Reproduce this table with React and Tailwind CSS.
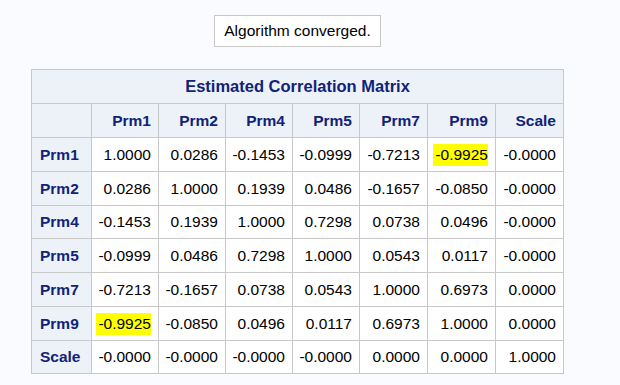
const cols = ['Prm1', 'Prm2', 'Prm4', 'Prm5', 'Prm7', 'Prm9', 'Scale'];

const rows = [
  ['Prm1', ['1.0000', '0.0286', '-0.1453', '-0.0999', '-0.7213', '-0.9925', '-0.0000']],
  ['Prm2', ['0.0286', '1.0000', '0.1939', '0.0486', '-0.1657', '-0.0850', '-0.0000']],
  ['Prm4', ['-0.1453', '0.1939', '1.0000', '0.7298', '0.0738', '0.0496', '-0.0000']],
  ['Prm5', ['-0.0999', '0.0486', '0.7298', '1.0000', '0.0543', '0.0117', '-0.0000']],
  ['Prm7', ['-0.7213', '-0.1657', '0.0738', '0.0543', '1.0000', '0.6973', '0.0000']],
  ['Prm9', ['-0.9925', '-0.0850', '0.0496', '0.0117', '0.6973', '1.0000', '0.0000']],
  ['Scale', ['-0.0000', '-0.0000', '-0.0000', '-0.0000', '0.0000', '0.0000', '1.0000']],
];

// cells flagged in the output
const flagged = { 'Prm1:Prm9': true, 'Prm9:Prm1': true };

export default function App() {
  return (
    <div
      className="min-h-[385px] w-[620px] bg-[#fafbfe] text-[15.5px]"
      style={{ fontFamily: '"Liberation Sans", Arial, sans-serif' }}
    >
      <div className="flex w-[595px] flex-col items-center pt-[15px]">
        {/* note */}
        <div className="flex h-[32px] items-center border border-[#c8c8c8] bg-white px-[9px] text-black">
          Algorithm converged.
        </div>

        {/* matrix */}
        <table className="mt-[22px] w-[533px] table-fixed border-collapse border border-[#c1c1c1] bg-white">
          <colgroup>
            <col className="w-[60px]" />
            {cols.map((c, i) => (
              <col key={c} className={i < 4 ? 'w-[67px]' : 'w-[68px]'} />
            ))}
          </colgroup>
          <thead>
            <tr className="h-[34px]">
              <th colSpan={8} className="border border-[#c8c8c8] bg-[#edf2f9] text-center text-[16.5px] font-bold text-[#112277]">
                Estimated Correlation Matrix
              </th>
            </tr>
            <tr className="h-[34px]">
              <th className="border border-[#c8c8c8] bg-[#edf2f9]"></th>
              {cols.map((c) => (
                <th key={c} className="border border-[#c8c8c8] bg-[#edf2f9] pr-[7px] text-right font-bold text-[#112277]">
                  {c}
                </th>
              ))}
            </tr>
          </thead>
          <tbody>
            {rows.map(([name, vals]) => (
              <tr key={name} className="h-[33.75px]">
                <th className="border border-[#c8c8c8] bg-[#edf2f9] pl-[8px] text-left font-bold text-[#112277]">
                  {name}
                </th>
                {vals.map((v, i) => (
                  <td key={i} className="border border-[#c8c8c8] pr-[7px] text-right text-black">
                    {flagged[`${name}:${cols[i]}`] ? (
                      <span className="inline-block bg-[#ffff00] pl-[2px] leading-[22px]">{v}</span>
                    ) : (
                      v
                    )}
                  </td>
                ))}
              </tr>
            ))}
          </tbody>
        </table>
      </div>
    </div>
  );
}
